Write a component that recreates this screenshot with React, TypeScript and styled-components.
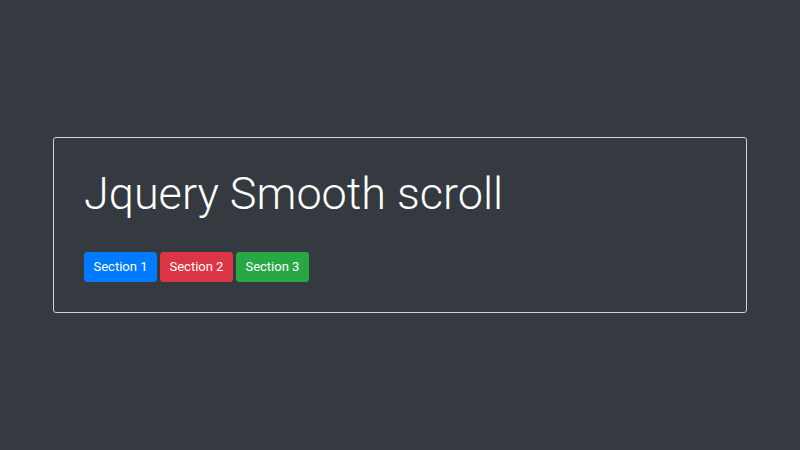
import React from 'react'
import styled, { createGlobalStyle } from 'styled-components'

const GlobalStyle = createGlobalStyle`
    html, body {
        margin: 0;
        padding: 0;
        height: 100%;
    }
    body {
        background: #343a40;
        font-family: Roboto, 'Liberation Sans', sans-serif;
        color: #fff;
    }
    #root {
        height: 100%;
    }
`

const Page = styled.div`
    height: 100%;
    display: flex;
    align-items: center;
    justify-content: center;
`

const Panel = styled.div`
    box-sizing: border-box;
    width: 694px;
    padding: 29px 30px 30px;
    border: 1px solid #ced4da;
    border-radius: 3px;
`

const Title = styled.h1`
    margin: 0 0 31px;
    font-size: 45px;
    font-weight: 300;
    line-height: 54px;
    color: #fff;
`

const ButtonRow = styled.div`
    display: flex;
    gap: 3px;
`

type ButtonProps = {
    tone: string
}

const Button = styled.button<ButtonProps>`
    font-family: Roboto, 'Liberation Sans', sans-serif;
    font-size: 13px;
    line-height: 18px;
    padding: 5px 8.5px;
    color: #fff;
    background: ${(props) => props.tone};
    border: 1px solid ${(props) => props.tone};
    border-radius: 3px;
    cursor: pointer;
`

const sections = [
    { label: 'Section 1', tone: '#007bff' },
    { label: 'Section 2', tone: '#dc3545' },
    { label: 'Section 3', tone: '#28a745' },
]

export default function App() {
    return (
        <Page>
            <GlobalStyle />
            <Panel>
                <Title>Jquery Smooth scroll</Title>
                <ButtonRow>
                    {sections.map((s) => (
                        <Button key={s.label} tone={s.tone}>
                            {s.label}
                        </Button>
                    ))}
                </ButtonRow>
            </Panel>
        </Page>
    )
}
